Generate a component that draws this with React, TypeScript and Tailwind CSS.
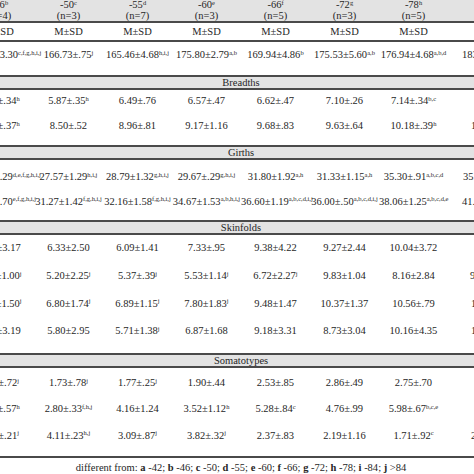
import React from 'react';

type Cell = [string, string?];

// visible part of the table: 8 value columns, 69px each, first one half cut off
const heads: [string, string, string][] = [
  ['-46', 'b', '4'],
  ['-50', 'c', '3'],
  ['-55', 'd', '7'],
  ['-60', 'e', '3'],
  ['-66', 'f', '5'],
  ['-72', 'g', '3'],
  ['-78', 'h', '5'],
];

type Row = { cells: Cell[]; last?: Cell; lastPad?: string };

const heightRow: Row = {
  cells: [
    ['164.75±3.30', 'c,f,g,h,i,j'],
    ['166.73±.75', 'j'],
    ['165.46±4.68', 'h,i,j'],
    ['175.80±2.79', 'a,b'],
    ['169.94±4.86', 'b'],
    ['175.53±5.60', 'a,b'],
    ['176.94±4.68', 'a,b,d'],
  ],
  last: ['183.20±3.41', 'a,b,c,d,f'],
  lastPad: 'pl-[14px]',
};

const sections: { title: string; pt: string; h: string; rh: string; rows: Row[] }[] = [
  {
    title: 'Breadths',
    pt: 'pt-[5px]',
    h: 'h-[55px]',
    rh: 'h-[30px]',
    rows: [
      {
        cells: [
          ['5.60±.34', 'h'],
          ['5.87±.35', 'h'],
          ['6.49±.76'],
          ['6.57±.47'],
          ['6.62±.47'],
          ['7.10±.26'],
          ['7.14±.34', 'b,c'],
        ],
      },
      {
        cells: [
          ['8.37±.37', 'h'],
          ['8.50±.52'],
          ['8.96±.81'],
          ['9.17±1.16'],
          ['9.68±.83'],
          ['9.63±.64'],
          ['10.18±.39', 'h'],
        ],
        last: ['10.52±.48'],
        lastPad: 'pl-[23px]',
      },
    ],
  },
  {
    title: 'Girths',
    pt: 'pt-[11px]',
    h: 'h-[60px]',
    rh: 'h-[28px]',
    rows: [
      {
        cells: [
          ['26.13±1.29', 'd,e,f,g,h,i,j'],
          ['27.57±1.29', 'h,i,j'],
          ['28.79±1.32', 'g,h,i,j'],
          ['29.67±.29', 'g,h,i,j'],
          ['31.80±1.92', 'a,h'],
          ['31.33±1.15', 'a,h'],
          ['35.30±.91', 'a,b,c,d'],
        ],
        last: ['35.25±1.40', 'a,b,c,d'],
        lastPad: 'pl-[15px]',
      },
      {
        cells: [
          ['30.07±1.70', 'e,f,g,h,i,j'],
          ['31.27±1.42', 'f,g,h,i,j'],
          ['32.16±1.58', 'f,g,h,i,j'],
          ['34.67±1.53', 'a,b,h,i,j'],
          ['36.60±1.19', 'a,b,c,d,i,j'],
          ['36.00±.50', 'a,b,c,d,i,j'],
          ['38.06±1.25', 'a,b,c,d,e'],
        ],
        last: ['41.02±1.37', 'a,b,c,d,e'],
        lastPad: 'pl-[14px]',
      },
    ],
  },
  {
    title: 'Skinfolds',
    pt: 'pt-[7px]',
    h: 'h-[118px]',
    rh: 'h-[30.5px]',
    rows: [
      {
        cells: [
          ['6.65±3.17'],
          ['6.33±2.50'],
          ['6.09±1.41'],
          ['7.33±.95'],
          ['9.38±4.22'],
          ['9.27±2.44'],
          ['10.04±3.72'],
        ],
      },
      {
        cells: [
          ['4.95±1.00', 'j'],
          ['5.20±2.25', 'j'],
          ['5.37±.39', 'j'],
          ['5.53±1.14', 'j'],
          ['6.72±2.27', 'j'],
          ['9.83±1.04'],
          ['8.16±2.84'],
        ],
        last: ['9.75±2.06'],
        lastPad: 'pl-[22px]',
      },
      {
        cells: [
          ['6.30±1.50', 'j'],
          ['6.80±1.74', 'j'],
          ['6.89±1.15', 'j'],
          ['7.80±1.83', 'j'],
          ['9.48±1.47'],
          ['10.37±1.37'],
          ['10.56±.79'],
        ],
        last: ['11.25±1.87'],
        lastPad: 'pl-[23px]',
      },
      {
        cells: [
          ['5.48±3.19'],
          ['5.80±2.95'],
          ['5.71±1.38', 'j'],
          ['6.87±1.68'],
          ['9.18±3.31'],
          ['8.73±3.04'],
          ['10.16±4.35'],
        ],
        last: ['12.40±3.88'],
        lastPad: 'pl-[23px]',
      },
    ],
  },
  {
    title: 'Somatotypes',
    pt: 'pt-[9px]',
    h: 'h-[88px]',
    rh: 'h-[30px]',
    rows: [
      {
        cells: [
          ['1.58±.72', 'j'],
          ['1.73±.78', 'j'],
          ['1.77±.25', 'j'],
          ['1.90±.44'],
          ['2.53±.85'],
          ['2.86±.49'],
          ['2.75±.70'],
        ],
      },
      {
        cells: [
          ['2.95±.57', 'h'],
          ['2.80±.33', 'f,h,j'],
          ['4.16±1.24'],
          ['3.52±1.12', 'h'],
          ['5.28±.84', 'c'],
          ['4.76±.99'],
          ['5.98±.67', 'b,c,e'],
        ],
      },
      {
        cells: [
          ['4.22±.21', 'j'],
          ['4.11±.23', 'h,j'],
          ['3.09±.87', 'j'],
          ['3.82±.32', 'j'],
          ['2.37±.83'],
          ['2.19±1.16'],
          ['1.71±.92', 'c'],
        ],
        last: ['2.06±.77'],
        lastPad: 'pl-[23px]',
      },
    ],
  },
];

const legend: [string, string][] = [
  ['a', '-42'],
  ['b', '-46'],
  ['c', '-50'],
  ['d', '-55'],
  ['e', '-60'],
  ['f', '-66'],
  ['g', '-72'],
  ['h', '-78'],
  ['i', '-84'],
  ['j', '>84'],
];

function Val({ cell }: { cell: Cell }) {
  return (
    <span className="whitespace-nowrap">
      {cell[0]}
      {cell[1] && <sup className="text-[6.5px]">{cell[1]}</sup>}
    </span>
  );
}

function DataRow({ row, h }: { row: Row; h: string }) {
  return (
    <div className={`grid grid-cols-[repeat(8,69px)] leading-[12px] ${h}`}>
      {row.cells.map((c, i) => (
        <div key={i} className="text-center whitespace-nowrap">
          <Val cell={c} />
        </div>
      ))}
      <div className={`text-left whitespace-nowrap ${row.lastPad ?? ''}`}>
        {row.last && <Val cell={row.last} />}
      </div>
    </div>
  );
}

function Band({ title }: { title: string }) {
  return (
    <div className="h-[15px] border-y-2 border-[#4a4a4a] bg-[#e3e3e3] flex items-center justify-center leading-[11px]">
      {title}
    </div>
  );
}

export default function App() {
  return (
    <div className="w-[474px] h-[474px] overflow-hidden bg-white text-[#262626] text-[10.5px] font-['Liberation_Serif',serif]">
      <div className="ml-[-35px] w-[552px] flex flex-col">
        {/* column heads */}
        <div className="h-[23px] bg-[#e3e3e3] border-b-2 border-[#4a4a4a] grid grid-cols-[repeat(8,69px)] leading-[10.5px]">
          {heads.map(([g, s, n]) => (
            <div key={g} className="text-center flex flex-col">
              <span>
                {g}
                <sup className="text-[6.5px]">{s}</sup>
              </span>
              <span>(n={n})</span>
            </div>
          ))}
          <div />
        </div>

        <div className="h-[19px] border-b-2 border-[#4a4a4a] grid grid-cols-[repeat(8,69px)] items-center">
          {heads.map(([g]) => (
            <div key={g} className="text-center">
              M±SD
            </div>
          ))}
          <div />
        </div>

        <div className="h-[33px] pt-[7px]">
          <DataRow row={heightRow} h="h-[26px]" />
        </div>

        {sections.map((s) => (
          <div key={s.title} className="flex flex-col">
            <Band title={s.title} />
            <div className={`${s.h} ${s.pt} flex flex-col`}>
              {s.rows.map((r, i) => (
                <DataRow key={i} row={r} h={s.rh} />
              ))}
            </div>
          </div>
        ))}

        <div className="border-t-2 border-[#4a4a4a] pt-[4px] text-center leading-[12px]">
          different from:{' '}
          {legend.map(([k, v], i) => (
            <span key={k}>
              <b>{k}</b> {v}
              {i < legend.length - 1 ? '; ' : ''}
            </span>
          ))}
        </div>
      </div>
    </div>
  );
}
